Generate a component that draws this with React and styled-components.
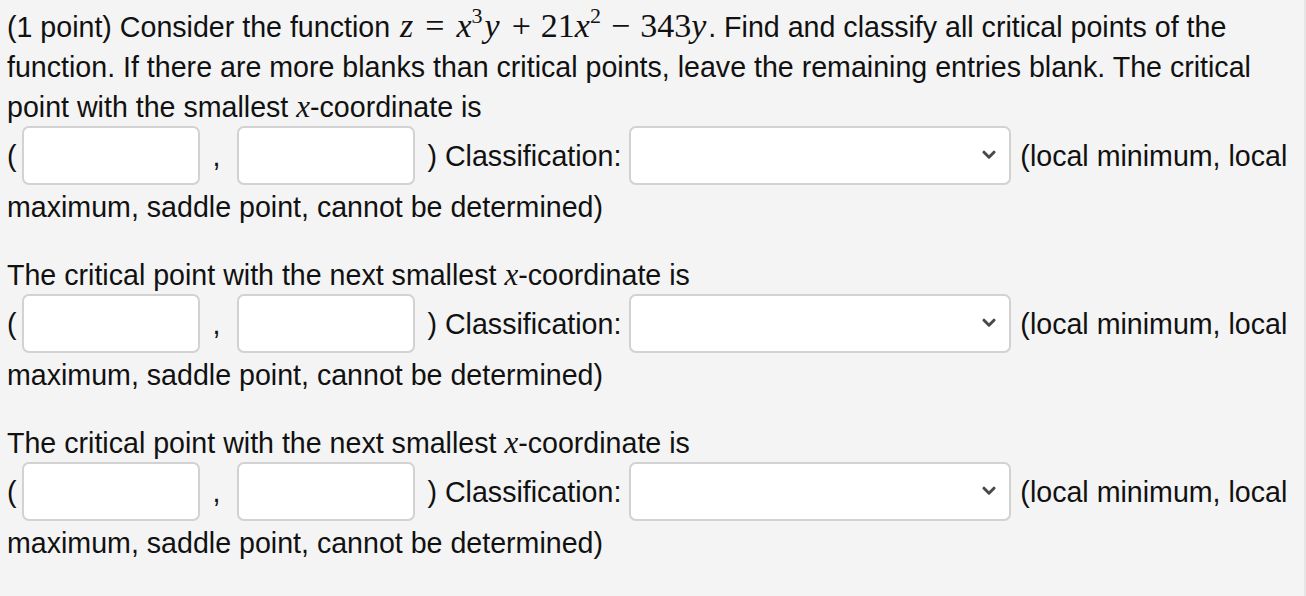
import React from 'react'
import styled, { createGlobalStyle } from 'styled-components'

const GlobalStyle = createGlobalStyle`
  html, body {
    margin: 0;
    padding: 0;
    background: #f4f4f4;
  }
  body {
    font-family: "Liberation Sans", Arial, sans-serif;
    color: #111;
  }
`

const Page = styled.div`
  box-sizing: border-box;
  width: 1306px;
  min-height: 596px;
  padding: 7px 0 0 7px;
  border-right: 2px solid #e6e6e6;
  font-size: 28.6px;
  line-height: 40px;
`

const Prompt = styled.div`
  white-space: nowrap;
`

const Math = styled.span`
  font-family: "Liberation Serif", "Times New Roman", serif;
  font-size: ${p => (p.$big ? 34 : 31)}px;
  line-height: 0;
  margin: 0 ${p => (p.$big ? 2 : 0)}px 0 ${p => (p.$big ? 10 : 0)}px;
`

const Var = styled.i`
  font-style: italic;
  padding: ${p => (p.$pad ? '0 2px' : '0')};
`

const Op = styled.span`
  padding: 0 ${p => (p.$rel ? 12 : 10)}px;
`

const Sup = styled.sup`
  font-size: 22px;
  line-height: 0;
  vertical-align: 14px;
`

const Section = styled.div`
  margin-top: ${p => p.$top}px;
`

const Line = styled.div`
  white-space: nowrap;
`

const AnswerRow = styled.div`
  display: flex;
  align-items: center;
  height: 59px;
  margin-top: -1px;
  white-space: nowrap;
`

const Tail = styled.div`
  margin-top: 2px;
  white-space: nowrap;
`

const Piece = styled.span`
  margin-left: ${p => p.$ml || 0}px;
`

const Blank = styled.input`
  box-sizing: border-box;
  width: 178px;
  height: 59px;
  margin-left: ${p => p.$ml || 0}px;
  background: #fff;
  border: 2px solid #d2d2d2;
  border-radius: 7px;
  outline: none;
  font-size: 24px;
`

const SelectBox = styled.div`
  box-sizing: border-box;
  position: relative;
  width: 382px;
  height: 59px;
  margin-left: ${p => p.$ml || 0}px;
  background: #fff;
  border: 2px solid #d2d2d2;
  border-radius: 7px;
`

const Chevron = styled.svg`
  position: absolute;
  right: 13px;
  top: 22px;
`

const Arrow = () => (
  <Chevron width="14" height="10" viewBox="0 0 14 10">
    <path d="M2 2.2 L7 7.2 L12 2.2" fill="none" stroke="#4a4a4a" strokeWidth="3" strokeLinecap="round" strokeLinejoin="round" />
  </Chevron>
)

const Answer = () => (
  <>
    <AnswerRow>
      <Piece>(</Piece>
      <Blank $ml={5} />
      <Piece $ml={13}>,</Piece>
      <Blank $ml={17} />
      <Piece $ml={12}>) Classification:</Piece>
      <SelectBox $ml={8}>
        <Arrow />
      </SelectBox>
      <Piece $ml={9}>(local minimum, local</Piece>
    </AnswerRow>
    <Tail>maximum, saddle point, cannot be determined)</Tail>
  </>
)

const X = () => (
  <Math>
    <Var>x</Var>
  </Math>
)

const App = () => (
  <Page>
    <GlobalStyle />
    <Prompt>
      (1 point) Consider the function
      <Math $big>
        <Var>z</Var>
        <Op $rel>=</Op>
        <Var>x</Var>
        <Sup>3</Sup>
        <Var $pad>y</Var>
        <Op>+</Op>
        21<Var>x</Var>
        <Sup>2</Sup>
        <Op>−</Op>
        343<Var>y</Var>
      </Math>
      . Find and classify all critical points of the
      <br />
      function. If there are more blanks than critical points, leave the remaining entries blank. The critical
      <br />
      point with the smallest <X />-coordinate is
    </Prompt>
    <Answer />

    <Section $top={28}>
      <Line>
        The critical point with the next smallest <X />-coordinate is
      </Line>
      <Answer />
    </Section>

    <Section $top={28}>
      <Line>
        The critical point with the next smallest <X />-coordinate is
      </Line>
      <Answer />
    </Section>
  </Page>
)

export default App
